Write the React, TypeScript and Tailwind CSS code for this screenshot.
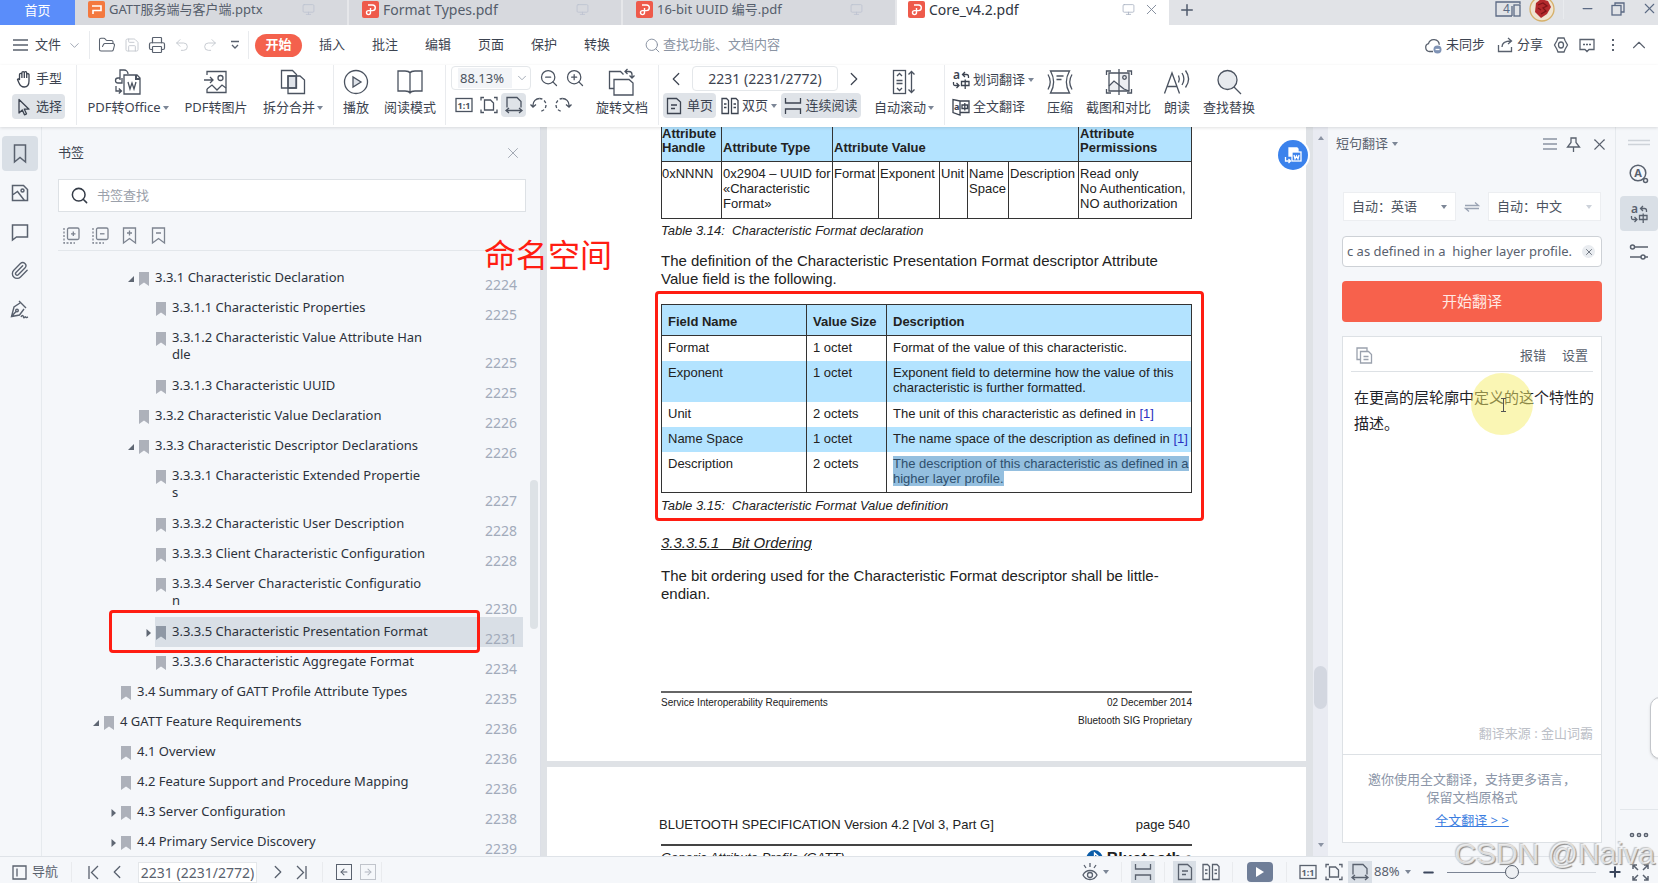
import type { ReactNode } from "react";
import clsx from "clsx";
import {
  ArrowLeft,
  ArrowRight,
  ChevronDown,
  ChevronLeft,
  ChevronRight,
  ChevronUp,
  FolderOpen,
  Minus,
  Monitor,
  Paperclip,
  Plus,
  Printer,
  Redo2,
  Save,
  Search,
  Undo2,
  X,
  ZoomIn,
  ZoomOut,
} from "lucide-react";

type SvgProps = {
  w: number;
  h: number;
  children: ReactNode;
  className?: string;
  sw?: number;
};

function Svg({ w, h, children, className, sw = 1.3 }: SvgProps) {
  return (
    <svg
      width={w}
      height={h}
      viewBox={`0 0 ${w} ${h}`}
      fill="none"
      stroke="currentColor"
      strokeWidth={sw}
      className={clsx("shrink-0 overflow-visible", className)}
      aria-hidden="true"
    >
      {children}
    </svg>
  );
}

const Caret = ({ className = "text-[#7c8696]" }: { className?: string }) => (
  <Svg w={6} h={4} className={className}>
    <path d="M0 0h6L3 4z" fill="currentColor" stroke="none" />
  </Svg>
);

const Sep = ({ className }: { className?: string }) => (
  <div className={clsx("w-px shrink-0 bg-[#e9ebee]", className)} />
);

/* ---------- icons ---------- */

const PdfLogo = () => (
  <Svg w={17} h={17} sw={1.4} className="text-white">
    <rect width="17" height="17" rx="2" fill="#ee5a4b" stroke="none" />
    <path d="M6 4h4.500a2.800 2.800 0 0 1 0 5.600H6.500a2 2 0 1 0 2 2V7" />
  </Svg>
);

const PptLogo = () => (
  <Svg w={17} h={17} sw={1.6} className="text-white">
    <rect width="17" height="17" rx="2" fill="#f4793f" stroke="none" />
    <path d="M4 5h9v4.500H5V13" />
  </Svg>
);

const HandIcon = () => (
  <Svg w={16} h={18}>
    <path d="M3.500 10V4.500a1.200 1.200 0 0 1 2.400 0V8V2.800a1.200 1.200 0 0 1 2.400 0V8V2.800a1.200 1.200 0 0 1 2.400 0V8V4.500a1.200 1.200 0 0 1 2.300 0V11c0 4-2 6-4.800 6S4 15.500 3 13L1.500 9.500c.5-1 1.500-.8 2 .5z" />
  </Svg>
);

const CursorIcon = () => (
  <Svg w={16} h={18}>
    <path d="M3 1.500v13.500l3.300-3 2.200 4.800 2-1-2.200-4.600H13z" strokeLinejoin="round" />
  </Svg>
);

const OfficeIcon = () => (
  <Svg w={28} h={26}>
    <path d="M6 11V1h4a4 4 0 0 1 4 4M6 9H4a2.500 2.500 0 0 0 0 5h4V9" />
    <path d="M10 6h13l3 3v16H10z" />
    <path d="M22 6v4h4" strokeWidth="2" />
    <path d="M14 13l2 7 2-6 2 6 2-7" />
    <path d="M2 17v5h5M4.800 19.500L7.500 22l-2.700 2.500" />
  </Svg>
);

const PictureIcon = () => (
  <Svg w={26} h={26}>
    <path d="M4 6V2.500h19v21H4V20" />
    <circle cx="17.500" cy="9" r="2.500" />
    <path d="M1 11h9M7 8l3 3-3 3M4 20l5-4 5 5 5-5 4 3" />
  </Svg>
);

const SplitIcon = () => (
  <Svg w={26} h={26}>
    <path d="M8 7h8v12H8z" fill="#dfe3e9" />
    <path d="M1.500 1.500h11l4 4v13.500h-15z" />
    <path d="M8 7h12l4.500 4v13.500H8z" />
  </Svg>
);

const PlayIcon = () => (
  <Svg w={26} h={26}>
    <circle cx="13" cy="13" r="11.500" />
    <path d="M10 8v10l8-5z" fill="#dfe3e9" />
  </Svg>
);

const BookIcon = () => (
  <Svg w={28} h={26}>
    <path d="M14 4c-1-2-3-2-5-2H2v20h7c2 0 4 0 5 2 1-2 3-2 5-2h7V2h-7c-2 0-4 0-5 2zM14 4v20" />
  </Svg>
);

const OneToOne = () => (
  <Svg w={18} h={16}>
    <rect x="1" y="1.500" width="16" height="13" />
    <text x="9" y="11.500" textAnchor="middle" fontSize="9" fontWeight="700" fill="currentColor" stroke="none">
      1:1
    </text>
  </Svg>
);

const FitPage = () => (
  <Svg w={18} h={18}>
    <path d="M1 4.500V1.500h3M14 1.500h3v3M1 13.500v3h3M14 16.500h3v-3" />
    <path d="M4.500 4h6l3 3v7h-9z" />
  </Svg>
);

const FitWidth = () => (
  <Svg w={18} h={18}>
    <path d="M2 11.500V1.500h10l4 4v6" />
    <path d="M1 14.500h16M4 12l-3 2.500L4 17M14 12l3 2.500-3 2.500" />
  </Svg>
);

const RotateLeft = () => (
  <Svg w={18} h={18}>
    <path d="M3 11V9a6.500 6.500 0 0 1 6.500-6.500M.500 8.500L3 11l3-2.500" />
    <path d="M9.500 2.500a6.500 6.500 0 1 1 0 13" strokeDasharray="3 2" />
  </Svg>
);

const RotateDoc = () => (
  <Svg w={28} h={28}>
    <path d="M6 20.500H1.500V3.500h11l3 3" />
    <path d="M6 11.500h15l4 3.500v12H6z" />
    <path d="M17 3.500h4a3 3 0 0 1 3 3V10M19.500 1L17 3.500 19.500 6M21.500 7.500L24 10l2.500-2.500" />
  </Svg>
);

const SinglePage = () => (
  <Svg w={16} h={18}>
    <path d="M1.500 1.500h9l4 3.500v11.500h-13zM5 8h6M5 11.500h4" />
  </Svg>
);

const DoublePage = () => (
  <Svg w={18} h={18}>
    <path d="M1 1.500h4.500l2 2v13H1zM10.500 1.500H15l2 2v13h-6.500z" />
    <path d="M3 7h2.500M3 10.500h2.500M12.500 7H15M12.500 10.500H15" />
  </Svg>
);

const Continuous = () => (
  <Svg w={18} h={18}>
    <path d="M1.500 1v5h15V1M1.500 17v-5h15v5" />
  </Svg>
);

const AutoScroll = () => (
  <Svg w={24} h={26}>
    <rect x="1.500" y="1.500" width="12" height="23" />
    <path d="M5 7L7.500 4.500 10 7M5 19l2.500 2.500L10 19M4.500 11.500h6M4.500 14.500h6" />
    <path d="M19.500 2.500v21M16.500 5.500l3-3 3 3M16.500 20.500l3 3 3-3" />
  </Svg>
);

const WordTranslate = () => (
  <Svg w={18} h={18}>
    <text x="1" y="7.500" fontSize="12" fontWeight="600" fill="currentColor" stroke="none">
      a
    </text>
    <path d="M10.500 3.500h4a2 2 0 0 1 2 2V7M13 1l-2.500 2.500L13 6" />
    <path d="M9.500 10.500h7.500v4H9.500zM13.200 8.500V18" />
    <path d="M1.500 11v2a1.500 1.500 0 0 0 1.500 1.500h3.500M4.500 12L7 14.500 4.500 17" />
  </Svg>
);

const FullTranslate = () => (
  <Svg w={18} h={18}>
    <path d="M8 3L1 1.500v13L8 17zM8 3h9v11.500H8M10 7h5.500v3.500H10zM12.800 5v7.500" />
    <text x="2" y="11.500" fontSize="9" fontWeight="700" fill="currentColor" stroke="none">
      a
    </text>
  </Svg>
);

const CompressIcon = () => (
  <Svg w={26} h={26}>
    <path d="M3.500 2h19c-4 7-4 15 0 22h-19c4-7 4-15 0-22z" />
    <path d="M9.500 7h7M9.500 10.500h5M1 5.500c3 5 3 10 0 15M25 5.500c-3 5-3 10 0 15" />
  </Svg>
);

const CompareIcon = () => (
  <Svg w={28} h={26}>
    <path d="M14 18v4H4v-4l5-6 5 6 4 4h6V4H14z" fill="#eceef1" stroke="none" />
    <path d="M1.500 6V2H6M22 2h4.500v4M1.500 20v4H6M22 24h4.500v-4" />
    <path d="M4 4h20v18H4z" />
    <path d="M14 0v26" />
    <circle cx="19.500" cy="8.500" r="1.800" />
    <path d="M4 17l5-5 5 4 5 4 5 2" />
  </Svg>
);

const ReadAloud = () => (
  <Svg w={28} h={26}>
    <path d="M1.500 24.500L9 4l7.500 20.500M4 17.500h10.500" />
    <path d="M15.500 6.500c1.200 2.500 1.200 4.500 0 7M19 4c2.500 4 2.500 8 0 12M22.500 1.500c4 5.500 4 11.500 0 17" />
  </Svg>
);

const FindIcon = () => (
  <Svg w={26} h={26}>
    <circle cx="11.500" cy="11" r="9.500" fill="#e7eaee" />
    <path d="M18 18l7 7" />
  </Svg>
);

const BookmarkFill = ({ active }: { active?: boolean }) => (
  <Svg w={10} h={14} className={active ? "text-[#8f98a5]" : "text-[#adb1ba]"}>
    <path d="M0 0h10v14L5 10.500 0 14z" fill="currentColor" stroke="none" />
  </Svg>
);

const Expander = ({ state }: { state?: "open" | "closed" }) => (
  <Svg w={8} h={8} className="mt-[6px] mr-[3px] text-[#5f6773]">
    {state === "open" && <path d="M7 1v6H1z" fill="currentColor" stroke="none" />}
    {state === "closed" && <path d="M2.500 0L7 4 2.500 8z" fill="currentColor" stroke="none" />}
  </Svg>
);

/* ---------- title tabs ---------- */

const tabs = [
  { title: "GATT服务端与客户端.pptx", logo: <PptLogo />, size: "text-[13px]" },
  { title: "Format Types.pdf", logo: <PdfLogo />, size: "text-[14px]" },
  { title: "16-bit UUID 编号.pdf", logo: <PdfLogo />, size: "text-[13px]" },
];

function TabBar() {
  return (
    <header className="flex h-[25px] shrink-0 items-stretch overflow-hidden bg-[#e1e3e7] text-[#555d6b]">
      <button className="w-[75px] bg-[#5a8dfa] pb-1 text-[13px] text-white">首页</button>
      {tabs.map((t) => (
        <button
          key={t.title}
          className="flex w-[274px] items-center border-r-2 border-[#e6e7ea] bg-[#d7d9de] pr-8 pb-[6px] pl-[13px]"
        >
          {t.logo}
          <span className={clsx("ml-1 flex-1 text-left whitespace-nowrap", t.size)}>{t.title}</span>
          <Monitor size={13} strokeWidth={1.5} className="text-[#bcc3d0]" />
        </button>
      ))}
      <div className="flex w-[272px] items-center bg-white pr-[9px] pb-[6px] pl-[11px]">
        <PdfLogo />
        <span className="ml-1 flex-1 text-[14px] text-[#2f3541]">Core_v4.2.pdf</span>
        <Monitor size={13} strokeWidth={1.5} className="text-[#a9b2c2]" />
        <button aria-label="关闭标签" className="ml-2">
          <X size={17} strokeWidth={1.3} className="text-[#7d8797]" />
        </button>
      </div>
      <button aria-label="新建标签" className="ml-[9px] pb-[6px] text-[#4e596b]">
        <Plus size={18} strokeWidth={2} />
      </button>
      <div className="ml-auto flex items-center gap-4 pb-2 text-[#5b6a84]">
        <Svg w={26} h={16} className="-mr-2">
          <path d="M17 15H1V1h24v2M17 15V5" />
          <rect x="19" y="4" width="6" height="11" />
          <text x="8" y="12" fontSize="12" fill="currentColor" stroke="none">
            4
          </text>
        </Svg>
        <Svg w={26} h={26} className="-mr-2">
          <circle cx="13" cy="13" r="12" fill="#efe4d2" stroke="#d6b06a" />
          <path d="M7 7l5-4 7 2 3 6-4 7-6 4-6-6z" fill="#b3292c" stroke="none" />
          <path d="M9 9l5-2 4 3-4 2 3 3-5 3M9 12l3 2" stroke="#7e1418" />
        </Svg>
        <Sep className="h-5 bg-[#d3d6db]" />
        <Minus size={15} strokeWidth={2} />
        <Svg w={14} h={14}>
          <path d="M4 3.500V1h9v9h-3" />
          <rect x="1" y="3.500" width="9" height="9.500" />
        </Svg>
        <X size={17} strokeWidth={1.500} />
      </div>
    </header>
  );
}

/* ---------- menu row ---------- */

const menus = ["插入", "批注", "编辑", "页面", "保护", "转换"];

function MenuBar() {
  return (
    <nav className="flex h-10 shrink-0 items-center bg-white pl-[13px] text-[13px] whitespace-nowrap text-[#3c4350]">
      <Svg w={15} h={12} className="text-[#59616e]">
        <path d="M0 1h15M0 6h15M0 11h15" />
      </Svg>
      <button className="ml-[7px]">文件</button>
      <ChevronDown size={15} strokeWidth={1.3} className="ml-[6px] text-[#8b94a3]" />
      <Sep className="ml-[7px] h-7" />
      <div className="ml-2 flex items-center gap-2 text-[#59616e]">
        <FolderOpen size={18} strokeWidth={1.4} />
        <Save size={16} strokeWidth={1.4} className="text-[#c4c8cf]" />
        <Printer size={18} strokeWidth={1.6} />
        <Undo2 size={16} strokeWidth={1.4} className="text-[#c4c8cf]" />
        <Redo2 size={16} strokeWidth={1.4} className="ml-1 text-[#c4c8cf]" />
        <Svg w={10} h={10} className="ml-1">
          <path d="M1 1.500h8M2 5l3 3 3-3" />
        </Svg>
      </div>
      <Sep className="ml-2 h-7" />
      <button className="ml-[6px] h-[23px] w-[47px] rounded-full bg-[#f4614d] font-bold text-white">开始</button>
      <div className="ml-[17px] flex gap-[27px]">
        {menus.map((m) => (
          <button key={m}>{m}</button>
        ))}
      </div>
      <label className="ml-[34px] flex items-center">
        <Search size={17} strokeWidth={1.4} className="text-[#8b94a3]" />
        <input
          aria-label="查找功能"
          placeholder="查找功能、文档内容"
          className="ml-[2px] w-40 outline-none placeholder:text-[#8b94a3]"
        />
      </label>
      <div className="ml-auto flex items-center pr-2 text-[#59616e]">
        <Svg w={19} h={17}>
          <path d="M9 14.500H5.500a4 4 0 0 1-1-7.800 5.500 5.500 0 0 1 10.800 1" />
          <circle cx="13.500" cy="12.500" r="4" fill="#7f93b5" stroke="none" />
          <path d="M11.500 12.500h4" stroke="#fff" />
        </Svg>
        <button className="ml-[3px] text-[#3c4350]">未同步</button>
        <Svg w={17} h={16} className="ml-3">
          <path d="M1.500 8v6.500h13V10" />
          <path d="M5 10c0-4 3-6 9-6M11 1l3.500 3L11 7" />
        </Svg>
        <button className="ml-[3px] text-[#3c4350]">分享</button>
        <Svg w={16} h={16} className="ml-[10px]">
          <path d="M5 1h6l1 2.500L14.500 8 12 12.500 11 15H5l-1-2.500L1.500 8 4 3.500z" />
          <ellipse cx="8" cy="8" rx="2.500" ry="3" />
        </Svg>
        <Svg w={16} h={15} className="ml-[10px]">
          <path d="M1 1.500h14v10h-5L8 13.500l-2-2H1zM4 6.500h2M7 6.500h2M10 6.500h2" />
        </Svg>
        <Svg w={4} h={14} sw={2} className="ml-[16px]">
          <path d="M2 1v2M2 6v2M2 11v2" />
        </Svg>
        <ChevronUp size={22} strokeWidth={1.2} className="ml-[13px]" />
      </div>
    </nav>
  );
}

/* ---------- toolbar ---------- */

type ToolProps = { icon: ReactNode; label: string; className: string; caret?: boolean };

function Tool({ icon, label, className, caret }: ToolProps) {
  return (
    <button className={clsx("flex shrink-0 flex-col items-center pt-[3px] whitespace-nowrap", className)}>
      <span className="flex h-[28px] items-center">{icon}</span>
      <span className="mt-[2px] flex h-5 items-center gap-[2px] text-[#3c4350]">
        {label}
        {caret && <Caret />}
      </span>
    </button>
  );
}

function Toolbar() {
  return (
    <div className="relative z-10 flex h-[62px] shrink-0 bg-white pl-3 text-[13px] text-[#4b5360] shadow-[0_1px_3px_rgba(0,0,0,0.12)]">
      <div className="flex w-[53px] flex-col gap-[3px] pt-[2px] text-[#3c4350]">
        <button className="flex h-6 items-center gap-1 pl-1">
          <HandIcon />
          手型
        </button>
        <button className="flex h-[25px] items-center gap-1 rounded-sm bg-[#dfe3e8] pl-1">
          <CursorIcon />
          选择
        </button>
      </div>
      <Sep className="ml-[11px] h-[60px]" />
      <Tool icon={<OfficeIcon />} label="PDF转Office" className="ml-[9px] w-[84px]" caret />
      <Tool icon={<PictureIcon />} label="PDF转图片" className="ml-[13px] w-[66px]" />
      <Tool icon={<SplitIcon />} label="拆分合并" className="ml-3 w-[64px]" caret />
      <Sep className="ml-2 h-[60px]" />
      <Tool icon={<PlayIcon />} label="播放" className="ml-[9px] w-[26px]" />
      <Tool icon={<BookIcon />} label="阅读模式" className="ml-[15px] w-[52px]" />
      <Sep className="ml-[9px] h-[60px]" />

      <div className="ml-[5px] flex w-[137px] flex-col gap-[3px] pt-[1px]">
        <div className="flex h-6 items-center">
          <label className="flex h-6 w-20 items-center rounded-sm border border-[#e4e7ea]">
            <input
              aria-label="缩放比例"
              defaultValue="88.13%"
              className="ml-[6px] h-5 w-[54px] bg-[#f2f4f7] pl-[2px] text-[13px] text-[#4b5360] outline-none"
            />
            <ChevronDown size={14} strokeWidth={1.3} className="ml-[3px] text-[#8b94a3]" />
          </label>
          <ZoomOut size={20} strokeWidth={1.5} className="ml-2" />
          <ZoomIn size={20} strokeWidth={1.5} className="ml-[6px]" />
        </div>
        <div className="flex h-6 items-center">
          <button aria-label="实际大小" className="flex h-6 w-[25px] items-center justify-center"><OneToOne /></button>
          <button aria-label="适合页面" className="flex h-6 w-[25px] items-center justify-center"><FitPage /></button>
          <button aria-label="适合宽度" className="flex h-6 w-[25px] items-center justify-center rounded-sm bg-[#dfe3e8]"><FitWidth /></button>
          <button aria-label="向左旋转" className="flex h-6 w-[25px] items-center justify-center"><RotateLeft /></button>
          <button aria-label="向右旋转" className="flex h-6 w-[25px] -scale-x-100 items-center justify-center"><RotateLeft /></button>
        </div>
      </div>

      <Tool icon={<RotateDoc />} label="旋转文档" className="ml-2 w-[52px]" />
      <Sep className="ml-[10px] h-[60px]" />

      <div className="ml-1 flex w-[198px] flex-col gap-[2px] pt-[1px] text-[#3c4350]">
        <div className="flex h-[25px] items-center pl-[2px]">
          <button aria-label="上一页"><ChevronLeft size={22} strokeWidth={1.3} /></button>
          <input
            aria-label="页码"
            defaultValue="2231 (2231/2772)"
            className="ml-[5px] h-[25px] w-[146px] rounded-sm border border-[#e4e7ea] text-center text-[14px] outline-none"
          />
          <button aria-label="下一页" className="ml-[5px]"><ChevronRight size={22} strokeWidth={1.3} /></button>
        </div>
        <div className="flex h-[25px] items-center">
          <button className="flex h-[25px] w-[53px] items-center justify-center gap-[5px] rounded-sm bg-[#dfe3e8]">
            <SinglePage />
            单页
          </button>
          <button className="ml-1 flex h-[25px] w-[58px] items-center justify-center gap-[3px]">
            <DoublePage />
            双页
            <Caret />
          </button>
          <button className="ml-[3px] flex h-[25px] w-20 items-center justify-center gap-[3px] rounded-sm bg-[#dfe3e8]">
            <Continuous />
            连续阅读
          </button>
        </div>
      </div>

      <Tool icon={<AutoScroll />} label="自动滚动" className="ml-[13px] w-[60px]" caret />
      <Sep className="ml-[10px] h-[60px]" />
      <div className="ml-[7px] flex w-[84px] flex-col gap-[2px] pt-[2px] text-[#3c4350]">
        <button className="flex h-[25px] items-center gap-[3px] whitespace-nowrap">
          <WordTranslate />
          划词翻译
          <Caret />
        </button>
        <button className="flex h-[25px] items-center gap-[3px] whitespace-nowrap">
          <FullTranslate />
          全文翻译
        </button>
      </div>
      <Tool icon={<CompressIcon />} label="压缩" className="ml-[11px] w-[26px]" />
      <Tool icon={<CompareIcon />} label="截图和对比" className="ml-[13px] w-[65px]" />
      <Tool icon={<ReadAloud />} label="朗读" className="ml-[13px] w-[26px]" />
      <Tool icon={<FindIcon />} label="查找替换" className="ml-[13px] w-[52px]" />
    </div>
  );
}

/* ---------- left side ---------- */

function LeftRail() {
  return (
    <aside className="flex w-[42px] shrink-0 flex-col items-center gap-1 border-r border-[#e6eaee] pt-[9px] pr-[2px] text-[#59616e]">
      <button aria-label="书签" className="flex h-[35px] w-9 items-center justify-center rounded-sm bg-[#d9dfe6]">
        <Svg w={14} h={19} sw={1.5}>
          <path d="M1.500 1h11v17L7 13.500 1.500 18z" />
        </Svg>
      </button>
      <button aria-label="缩略图" className="flex h-[35px] w-9 items-center justify-center">
        <Svg w={18} h={18} sw={1.5}>
          <path d="M1.500 1.500h11l4 4v11h-15zM1.500 11l5-3.500 7 9" />
          <circle cx="11.500" cy="6.500" r="1.500" />
        </Svg>
      </button>
      <button aria-label="批注" className="flex h-[35px] w-9 items-center justify-center">
        <Svg w={18} h={18} sw={1.5}>
          <path d="M1.500 2h15v12h-11l-4 3z" />
        </Svg>
      </button>
      <button aria-label="附件" className="flex h-[35px] w-9 items-center justify-center">
        <Paperclip size={19} strokeWidth={1.7} />
      </button>
      <button aria-label="签名" className="flex h-[35px] w-9 items-center justify-center">
        <Svg w={19} h={19} sw={1.4}>
          <path d="M9 1l7 7M10 3L4 7 1.500 16.500l8-1.500L14 9M1.500 16.500L6 11.500M11 17c1-2 2-2 2.500 0s1.500-1 2 0 1 .5 2.500 0" />
          <circle cx="7" cy="10.500" r="1.300" />
        </Svg>
      </button>
    </aside>
  );
}

type Mark = {
  lines: string[];
  page: number;
  level: 0 | 1 | 2 | 3;
  state?: "open" | "closed";
  active?: boolean;
};

const marks: Mark[] = [
  { lines: ["3.3.1 Characteristic Declaration"], page: 2224, level: 2, state: "open" },
  { lines: ["3.3.1.1 Characteristic Properties"], page: 2225, level: 3 },
  { lines: ["3.3.1.2 Characteristic Value Attribute Han", "dle"], page: 2225, level: 3 },
  { lines: ["3.3.1.3 Characteristic UUID"], page: 2225, level: 3 },
  { lines: ["3.3.2 Characteristic Value Declaration"], page: 2226, level: 2 },
  { lines: ["3.3.3 Characteristic Descriptor Declarations"], page: 2226, level: 2, state: "open" },
  { lines: ["3.3.3.1 Characteristic Extended Propertie", "s"], page: 2227, level: 3 },
  { lines: ["3.3.3.2 Characteristic User Description"], page: 2228, level: 3 },
  { lines: ["3.3.3.3 Client Characteristic Configuration"], page: 2228, level: 3 },
  { lines: ["3.3.3.4 Server Characteristic Configuratio", "n"], page: 2230, level: 3 },
  { lines: ["3.3.3.5 Characteristic Presentation Format"], page: 2231, level: 3, state: "closed", active: true },
  { lines: ["3.3.3.6 Characteristic Aggregate Format"], page: 2234, level: 3 },
  { lines: ["3.4 Summary of GATT Profile Attribute Types"], page: 2235, level: 1 },
  { lines: ["4 GATT Feature Requirements"], page: 2236, level: 0, state: "open" },
  { lines: ["4.1 Overview"], page: 2236, level: 1 },
  { lines: ["4.2 Feature Support and Procedure Mapping"], page: 2236, level: 1 },
  { lines: ["4.3 Server Configuration"], page: 2238, level: 1, state: "closed" },
  { lines: ["4.4 Primary Service Discovery"], page: 2239, level: 1, state: "closed" },
];

const indent = ["pl-[50px]", "pl-[67px]", "pl-[85px]", "pl-[102px]"];

function BookmarkRow({ mark }: { mark: Mark }) {
  return (
    <li
      className={clsx(
        "relative flex shrink-0",
        mark.lines.length > 1 ? "h-12" : "h-[30px]",
        indent[mark.level],
      )}
    >
      <span className="mt-[6px] flex">
        <Expander state={mark.state} />
      </span>
      <div className={clsx("flex flex-1 pr-[6px]", mark.active && "bg-[#d9dfe6]")}>
        <span className="mt-[9px] ml-px">
          <BookmarkFill active={mark.active} />
        </span>
        <a href="#" className="mt-[6px] ml-[6px] flex-1 text-[13px] leading-[17px] whitespace-nowrap text-[#2c323c]">
          {mark.lines.map((l) => (
            <span key={l} className="block">
              {l}
            </span>
          ))}
        </a>
        <span className="self-end text-[14px] leading-4 text-[#a2abba]">{mark.page}</span>
      </div>
      {mark.active && (
        <div className="absolute -top-[7px] -bottom-[6px] left-[67px] w-[371px] rounded-sm border-[3px] border-[#ff1d12]" />
      )}
    </li>
  );
}

function BookmarkPanel() {
  return (
    <section className="flex w-[498px] shrink-0 flex-col overflow-hidden pl-4">
      <div className="flex h-[52px] shrink-0 items-center justify-between pr-[18px]">
        <h2 className="text-[13px] text-[#3c4350]">书签</h2>
        <button aria-label="关闭书签" className="text-[#a1a8b3]">
          <X size={18} strokeWidth={1.3} />
        </button>
      </div>
      <label className="mr-[14px] flex h-[33px] shrink-0 items-center border border-[#dde1e5] bg-white pl-[11px]">
        <Search size={19} strokeWidth={1.9} className="text-[#343b47]" />
        <input
          aria-label="书签查找"
          placeholder="书签查找"
          className="ml-2 flex-1 text-[13px] outline-none placeholder:text-[#9aa0aa]"
        />
      </label>
      <div className="mr-[14px] flex h-[39px] shrink-0 items-center gap-3 border-b border-[#e3e7eb] pt-2 pl-[5px] text-[#7d8490]">
        <Svg w={17} h={17}>
          <rect x="4.500" y="1" width="11.500" height="11.500" rx="1.500" />
          <path d="M10.300 4.500v4.500M8 6.800h4.500" />
          <path d="M1 1v15h11" strokeDasharray="2 1.500" />
        </Svg>
        <Svg w={17} h={17}>
          <rect x="4.500" y="1" width="11.500" height="11.500" rx="1.500" />
          <path d="M8 6.800h4.500" />
          <path d="M1 1v15h11" strokeDasharray="2 1.500" />
        </Svg>
        <Svg w={17} h={17}>
          <path d="M2.500 1h12v15l-6-4.500-6 4.500zM8.500 3.500v5M6 6h5" />
        </Svg>
        <Svg w={17} h={17}>
          <path d="M2.500 1h12v15l-6-4.500-6 4.500zM6 6h5" />
        </Svg>
      </div>
      <div className="-ml-4 flex min-h-0 flex-1">
        <ul className="flex min-w-0 flex-1 flex-col overflow-hidden pt-3">
          {marks.map((m) => (
            <BookmarkRow key={m.lines[0]} mark={m} />
          ))}
        </ul>
        <div className="w-[17px] pt-[229px] pl-[7px]">
          <div className="h-[149px] w-2 rounded-full bg-[#dde2e6]" />
        </div>
      </div>
    </section>
  );
}

/* ---------- document ---------- */

const b = "border border-[#333]";

function FormatDeclaration() {
  return (
    <table className="w-full table-fixed border-collapse text-[13px] leading-[15px] text-[#222]">
      <colgroup>
        <col className="w-[60px]" />
        <col className="w-[111px]" />
        <col className="w-[46px]" />
        <col className="w-[61px]" />
        <col className="w-[28px]" />
        <col className="w-[41px]" />
        <col className="w-[70px]" />
        <col />
      </colgroup>
      <thead>
        <tr className="h-[33px] bg-[#b3e3ff] text-left align-bottom leading-[14px]">
          <th className={clsx(b, "border-t-0 pb-[6px]")}>Attribute Handle</th>
          <th className={clsx(b, "border-t-0 pb-[6px] pl-px")}>Attribute Type</th>
          <th colSpan={5} className={clsx(b, "border-t-0 pb-[6px] pl-px")}>Attribute Value</th>
          <th className={clsx(b, "border-t-0 pb-[6px] pl-px")}>Attribute Permissions</th>
        </tr>
      </thead>
      <tbody>
        <tr className="h-[57px] align-top">
          <td className={clsx(b, "pt-1")}>0xNNNN</td>
          <td className={clsx(b, "pt-1 pl-px whitespace-nowrap")}>
            0x2904 – UUID for
            <br />
            «Characteristic
            <br />
            Format»
          </td>
          <td className={clsx(b, "pt-1 pl-px")}>Format</td>
          <td className={clsx(b, "pt-1 pl-px")}>Exponent</td>
          <td className={clsx(b, "pt-1 pl-px")}>Unit</td>
          <td className={clsx(b, "pt-1 pl-px")}>Name Space</td>
          <td className={clsx(b, "pt-1 pl-px")}>Description</td>
          <td className={clsx(b, "pt-1 pl-px whitespace-nowrap")}>
            Read only
            <br />
            No Authentication,
            <br />
            NO authorization
          </td>
        </tr>
      </tbody>
    </table>
  );
}

const Ref = () => (
  <a href="#" className="text-[#2a2fc0]">
    [1]
  </a>
);

const fields: { name: string; size: string; text: ReactNode; tall?: boolean; blue?: boolean }[] = [
  { name: "Format", size: "1 octet", text: "Format of the value of this characteristic." },
  {
    name: "Exponent",
    size: "1 octet",
    text: "Exponent field to determine how the value of this characteristic is further formatted.",
    tall: true,
    blue: true,
  },
  { name: "Unit", size: "2 octets", text: <>The unit of this characteristic as defined in <Ref /></> },
  {
    name: "Name Space",
    size: "1 octet",
    text: <>The name space of the description as defined in <Ref /></>,
    blue: true,
  },
  {
    name: "Description",
    size: "2 octets",
    text: (
      <mark className="bg-[#94bfdf] text-[#2f4f6d]">
        The description of this characteristic as defined in a<br />
        higher layer profile.
      </mark>
    ),
    tall: true,
  },
];

function FormatDefinition() {
  return (
    <table className="w-full table-fixed border-collapse border border-[#333] text-[13px] leading-[15px] text-[#222]">
      <colgroup>
        <col className="w-[145px]" />
        <col className="w-[80px]" />
        <col />
      </colgroup>
      <thead>
        <tr className="h-[31px] border-b border-[#333] bg-[#b3e3ff] text-left">
          <th className="border-r border-[#333] pt-[3px] pl-[6px]">Field Name</th>
          <th className="border-r border-[#333] pt-[3px] pl-[6px]">Value Size</th>
          <th className="pt-[3px] pl-[6px]">Description</th>
        </tr>
      </thead>
      <tbody>
        {fields.map((f) => (
          <tr
            key={f.name}
            className={clsx("align-top", f.tall ? "h-[41px]" : "h-[25px]", f.blue && "bg-[#b3e3ff]")}
          >
            <td className="border-r border-[#333] pt-1 pl-[6px]">{f.name}</td>
            <td className="border-r border-[#333] pt-1 pl-[6px]">{f.size}</td>
            <td className="pt-1 pl-[6px] whitespace-pre-line">{f.text}</td>
          </tr>
        ))}
      </tbody>
    </table>
  );
}

function DocumentView() {
  return (
    <main className="flex min-w-0 flex-1 overflow-hidden border-l border-[#dcdfe6] bg-[#dfe2e6]">
      <div className="flex min-w-0 flex-1 flex-col gap-[6px] pr-[7px] pl-[6px] font-['Liberation_Sans',Arial,sans-serif]">
        <article className="relative h-[634px] shrink-0 bg-white px-[114px] text-[#222]">
          <FormatDeclaration />
          <p className="mt-1 text-[13px] leading-[15px] whitespace-pre italic">
            {"Table 3.14:  Characteristic Format declaration"}
          </p>
          <p className="mt-[14px] text-[15px] leading-[18px]">
            The definition of the Characteristic Presentation Format descriptor Attribute
            <br />
            Value field is the following.
          </p>
          <div className="relative mt-4">
            <FormatDefinition />
            <p className="mt-[5px] text-[13px] leading-[15px] whitespace-pre italic">
              {"Table 3.15:  Characteristic Format Value definition"}
            </p>
            <div className="absolute -top-[13px] -right-3 -bottom-2 -left-[6px] rounded-sm border-[3px] border-[#ff1d12]" />
          </div>
          <h3 className="mt-[21px] text-[15px] leading-[18px] whitespace-pre underline italic">
            {"3.3.3.5.1   Bit Ordering"}
          </h3>
          <p className="mt-[15px] text-[15px] leading-[18px]">
            The bit ordering used for the Characteristic Format descriptor shall be little-
            <br />
            endian.
          </p>
          <footer className="mt-[88px] flex justify-between border-t-2 border-[#666] pt-px text-[10px] leading-[18px]">
            <span>Service Interoperability Requirements</span>
            <span className="text-right">
              02 December 2014
              <br />
              Bluetooth SIG Proprietary
            </span>
          </footer>
          <button
            aria-label="转换"
            className="absolute top-[13px] right-[-2px] flex size-[30px] items-center justify-center rounded-full bg-[#3b82ec] text-white shadow-[0_0_0_2px_#fff]"
          >
            <Svg w={18} h={18}>
              <path d="M5 10V2h8l1 1v3H8v4z" fill="#fff" />
              <rect x="8" y="6" width="9" height="9" fill="#3b82ec" />
              <path d="M10 9l1 4 1.500-3 1.500 3 1-4M1.500 11v4H6M4.500 13L6.500 15l-2 2" />
            </Svg>
          </button>
        </article>
        <article className="h-[634px] shrink-0 bg-white px-[114px] pt-[49px] text-[#222]">
          <div className="-ml-[2px] flex justify-between pr-[2px] text-[13px] leading-[18px]">
            <span>BLUETOOTH SPECIFICATION Version 4.2 [Vol 3, Part G]</span>
            <span>page 540</span>
          </div>
          <div className="mt-[10px] flex items-start justify-between border-t-2 border-[#444] text-[13px]">
            <span className="pt-[3px] leading-[18px] italic">Generic Attribute Profile (GATT)</span>
            <span className="flex gap-1 pt-1 text-[16px] leading-[18px] font-bold">
              <Svg w={17} h={20} className="text-white">
                <ellipse cx="8.500" cy="10" rx="8.500" ry="10" fill="#0a5ca8" stroke="none" />
                <path d="M4.500 6.500l8 7-4 3.500V3l4 3.500-8 7" />
              </Svg>
              Bluetooth
              <span className="text-[9px]">®</span>
            </span>
          </div>
        </article>
      </div>
      <div className="flex w-[15px] shrink-0 flex-col items-center bg-[#e9ebf2] py-[9px]">
        <Caret className="rotate-180 text-[#8b93a3]" />
        <div className="mt-[526px] h-[43px] w-[13px] rounded-full bg-[#d3d7e0]" />
        <Caret className="mt-auto text-[#8b93a3]" />
      </div>
    </main>
  );
}

/* ---------- right side ---------- */

function LangSelect({ value, label, faded }: { value: string; label: string; faded?: boolean }) {
  return (
    <label className="relative flex h-[27px] w-[111px] items-center bg-white shadow-[0_0_0_1px_#eceef1]">
      <select
        aria-label={label}
        className="h-full w-full appearance-none bg-transparent pl-2 text-[13px] text-[#4b5360] outline-none"
      >
        <option>{value}</option>
      </select>
      <span className="pointer-events-none absolute right-2">
        <Caret className={faded ? "text-[#cdd2da]" : "text-[#7c8696]"} />
      </span>
    </label>
  );
}

function TranslatePanel() {
  return (
    <section className="flex w-[287px] shrink-0 flex-col pr-[13px] pl-[14px] text-[13px] text-[#59616e]">
      <div className="-mr-[7px] -ml-[6px] flex h-[34px] shrink-0 items-center">
        <button className="flex items-center gap-1">
          短句翻译
          <Caret />
        </button>
        <div className="ml-auto flex items-center gap-[9px]">
          <Svg w={14} h={12} className="text-[#8b94a3]">
            <path d="M0 1h14M0 6h14M0 11h14" />
          </Svg>
          <Svg w={15} h={15}>
            <path d="M5 1h5v4.500l3.500 4.500h-12L5 5.500zM7.500 10v5" />
          </Svg>
          <button aria-label="关闭翻译"><X size={19} strokeWidth={1.4} /></button>
        </div>
      </div>
      <div className="mt-8 flex shrink-0 items-center justify-between px-[2px]">
        <LangSelect label="源语言" value="自动：英语" />
        <Svg w={14} h={10} className="text-[#9aa3b3]">
          <path d="M0 3.500h13.500L10 .500M14 6.500H.500L4 9.500" />
        </Svg>
        <LangSelect label="目标语言" value="自动：中文" faded />
      </div>
      <label className="mt-4 flex h-[31px] shrink-0 items-center rounded border border-[#cdd1d6] bg-white pl-1">
        <input
          aria-label="翻译内容"
          defaultValue="c as defined in a  higher layer profile."
          className="w-[235px] text-[13px] text-[#59616e] outline-none"
        />
        <button aria-label="清空" className="flex size-[13px] items-center justify-center rounded-full bg-[#e9ecf0]">
          <X size={10} strokeWidth={2} />
        </button>
      </label>
      <button className="mt-[14px] h-[41px] shrink-0 rounded bg-[#f7614c] text-[15px] text-[#ffe9e4]">开始翻译</button>
      <div className="relative mt-[14px] flex min-h-0 flex-1 flex-col border border-[#dde1e5] bg-white px-2">
        <div className="flex h-[35px] items-center gap-4 border-b border-[#dde1e5] px-[5px] pt-[3px]">
          <Svg w={17} h={17} className="mr-auto text-[#9aa1ad]">
            <path d="M4 12.500H1V1h10v3" />
            <path d="M4.500 4.500h8l3 3v8.500h-11zM7.500 9.500h5M7.500 12.500h5" />
          </Svg>
          <button>报错</button>
          <button>设置</button>
        </div>
        <p className="pt-3 pl-[3px] text-[15px] leading-[26px] whitespace-nowrap text-[#1f2329]">
          在更高的层轮廓中定义的这个特性的
          <br />
          描述。
        </p>
        <p className="mt-auto mb-[11px] text-right leading-5 text-[#bcc0c7]">翻译来源 : 金山词霸</p>
        <div className="absolute top-[36px] left-[128px] size-[62px] rounded-full bg-[#f5ee6a]/50" />
        <Svg w={7} h={14} sw={1} className="absolute top-[61px] left-[157px] text-[#555]">
          <path d="M1 .500h5M3.500 .500v13M1 13.500h5" />
        </Svg>
      </div>
      <div className="mb-[13px] flex h-[88px] shrink-0 flex-col items-center border border-t-0 border-[#dde1e5] bg-white pt-[15px] leading-[18px] text-[#8c96a8]">
        <span>邀你使用全文翻译，支持更多语言，</span>
        <span>保留文档原格式</span>
        <a href="#" className="mt-[5px] text-[#3b7de0] underline">
          全文翻译 &gt; &gt;
        </a>
      </div>
    </section>
  );
}

function RightRail() {
  return (
    <aside className="flex w-[43px] shrink-0 flex-col items-center border-l border-[#e6eaee] pt-3 pl-1 text-[#59616e]">
      <Svg w={22} h={7} className="text-[#ced3d9]">
        <path d="M0 1.500h22M0 5.500h22" />
      </Svg>
      <button aria-label="查词" className="mt-[10px] flex h-9 w-full items-center justify-center">
        <Svg w={20} h={20} sw={1.5}>
          <circle cx="9" cy="9" r="7.800" />
          <text x="9" y="13" textAnchor="middle" fontSize="11" fontWeight="700" fill="currentColor" stroke="none">
            A
          </text>
          <circle cx="16.500" cy="16.500" r="2" />
        </Svg>
      </button>
      <button aria-label="翻译" className="mt-1 flex h-[35px] w-full items-center justify-center rounded-sm bg-[#d9dfe6]">
        <WordTranslate />
      </button>
      <button aria-label="设置" className="mt-[3px] flex h-9 w-full items-center justify-center">
        <Svg w={20} h={18} sw={1.5}>
          <circle cx="3.500" cy="4" r="2" />
          <path d="M5.500 4H19M1 14h11M16 14h3" />
          <circle cx="14" cy="14" r="2" />
        </Svg>
      </button>
      <button
        aria-label="更多"
        className="mt-auto mb-2 flex h-[39px] w-full items-center justify-center border-t border-[#e3e7eb] pt-3"
      >
        <Svg w={20} h={6} sw={1.5}>
          <circle cx="3" cy="3" r="1.600" />
          <circle cx="10" cy="3" r="1.600" />
          <circle cx="17" cy="3" r="1.600" />
        </Svg>
      </button>
    </aside>
  );
}

/* ---------- status bar ---------- */

function StatusBar() {
  return (
    <footer className="flex h-[27px] shrink-0 items-center border-t border-[#dfe3e8] bg-[#f5f7fa] pt-1 pl-3 text-[13px] whitespace-nowrap text-[#59616e]">
      <button className="flex items-center gap-[5px]">
        <Svg w={15} h={15}>
          <path d="M1 1h13v13H1zM5 3.500v8" />
        </Svg>
        导航
      </button>
      <Sep className="ml-[13px] h-5" />
      <Svg w={11} h={15} className="ml-4">
        <path d="M1 1v13M10 1L3.500 7.500 10 14" />
      </Svg>
      <ChevronLeft size={22} strokeWidth={1.4} className="ml-[7px]" />
      <input
        aria-label="当前页"
        defaultValue="2231 (2231/2772)"
        className="ml-[10px] h-[21px] w-[119px] border border-[#e4e7ea] bg-white text-center text-[14px] outline-none"
      />
      <ChevronRight size={22} strokeWidth={1.4} className="ml-[10px]" />
      <Svg w={11} h={15} className="ml-[7px]">
        <path d="M1 1l6.500 6.500L1 14M10 1v13" />
      </Svg>
      <Sep className="ml-[15px] h-5" />
      <button aria-label="后退" className="ml-[13px] flex size-4 items-center justify-center border border-[#59616e]">
        <ArrowLeft size={10} strokeWidth={2.5} />
      </button>
      <button
        aria-label="前进"
        className="ml-2 flex size-4 items-center justify-center border border-[#c0c4cb] text-[#b1b6bf]"
      >
        <ArrowRight size={10} strokeWidth={2.5} />
      </button>
      <Sep className="ml-[5px] h-5" />

      <div className="ml-auto flex items-center pr-[9px]">
        <Svg w={18} h={18}>
          <path d="M2 12c3-6 11-6 14 0-3 6-11 6-14 0zM9 0v4M3 2l2 3M15 2l-2 3" />
          <circle cx="9" cy="12" r="2.500" />
        </Svg>
        <span className="ml-1"><Caret /></span>
        <Sep className="ml-[12px] h-5" />
        <button aria-label="连续阅读" className="ml-[9px] flex h-[23px] w-6 items-center justify-center bg-[#d9dfe6]"><Continuous /></button>
        <Sep className="ml-[9px] h-5" />
        <button aria-label="单页" className="ml-2 flex h-[23px] w-[23px] items-center justify-center bg-[#d9dfe6]"><SinglePage /></button>
        <button aria-label="双页" className="ml-[6px]"><DoublePage /></button>
        <Sep className="ml-3 h-5" />
        <button aria-label="播放" className="ml-[14px] flex h-5 w-[26px] items-center justify-center rounded-sm bg-[#6f7e98] text-white">
          <Svg w={8} h={10}>
            <path d="M0 0l8 5-8 5z" fill="currentColor" stroke="none" />
          </Svg>
        </button>
        <Sep className="ml-[13px] h-5" />
        <button aria-label="实际大小" className="ml-3"><OneToOne /></button>
        <button aria-label="适合页面" className="ml-[8px]"><FitPage /></button>
        <button aria-label="适合宽度" className="ml-[5px] flex h-[23px] w-6 items-center justify-center bg-[#d9dfe6]"><FitWidth /></button>
        <span className="ml-[2px] w-[27px]">88%</span>
        <span className="ml-1"><Caret /></span>
        <Minus size={15} strokeWidth={3} className="ml-[10px] text-[#3b465c]" />
        <input
          type="range"
          aria-label="缩放"
          min={0}
          max={100}
          defaultValue={43}
          className="ml-[11px] h-4 w-[149px] appearance-none bg-[linear-gradient(to_right,#7c8494_43%,#d5d9df_43%)] bg-[length:100%_1px] bg-center bg-no-repeat [&::-webkit-slider-thumb]:size-[14px] [&::-webkit-slider-thumb]:appearance-none [&::-webkit-slider-thumb]:rounded-full [&::-webkit-slider-thumb]:border [&::-webkit-slider-thumb]:border-[#59616e] [&::-webkit-slider-thumb]:bg-[#eef0f3]"
        />
        <Plus size={16} strokeWidth={3} className="ml-[11px] text-[#3b465c]" />
        <Svg w={17} h={17} sw={1.5} className="ml-[9px]">
          <path d="M1 5V1h4M1 1l5 5M12 1h4v4M16 1l-5 5M1 12v4h4M1 16l5-5M16 12v4h-4M16 16l-5-5" />
        </Svg>
      </div>
    </footer>
  );
}

export default function App() {
  return (
    <div className="relative flex h-screen w-full flex-col overflow-hidden bg-[#f5f7fa] font-['Noto_Sans','Noto_Sans_CJK_SC',sans-serif]">
      <TabBar />
      <MenuBar />
      <Toolbar />
      <div className="relative flex min-h-0 flex-1">
        <LeftRail />
        <BookmarkPanel />
        <DocumentView />
        <TranslatePanel />
        <RightRail />
        <div className="absolute top-[112px] left-[484px] text-[32px] leading-8 text-[#ff1d12]">命名空间</div>
        <div className="absolute top-[570px] -right-3 h-[62px] w-5 rounded-xl border border-[#c3c6cb] bg-white shadow" />
      </div>
      <StatusBar />
      <div className="pointer-events-none absolute right-[3px] bottom-[11px] font-['Liberation_Sans',Arial,sans-serif] text-[30px] leading-9 text-white/70 [text-shadow:1px_1px_1px_#8a8a8a,-1px_-1px_1px_#c5c5c5]">
        CSDN @Naiva
      </div>
    </div>
  );
}
